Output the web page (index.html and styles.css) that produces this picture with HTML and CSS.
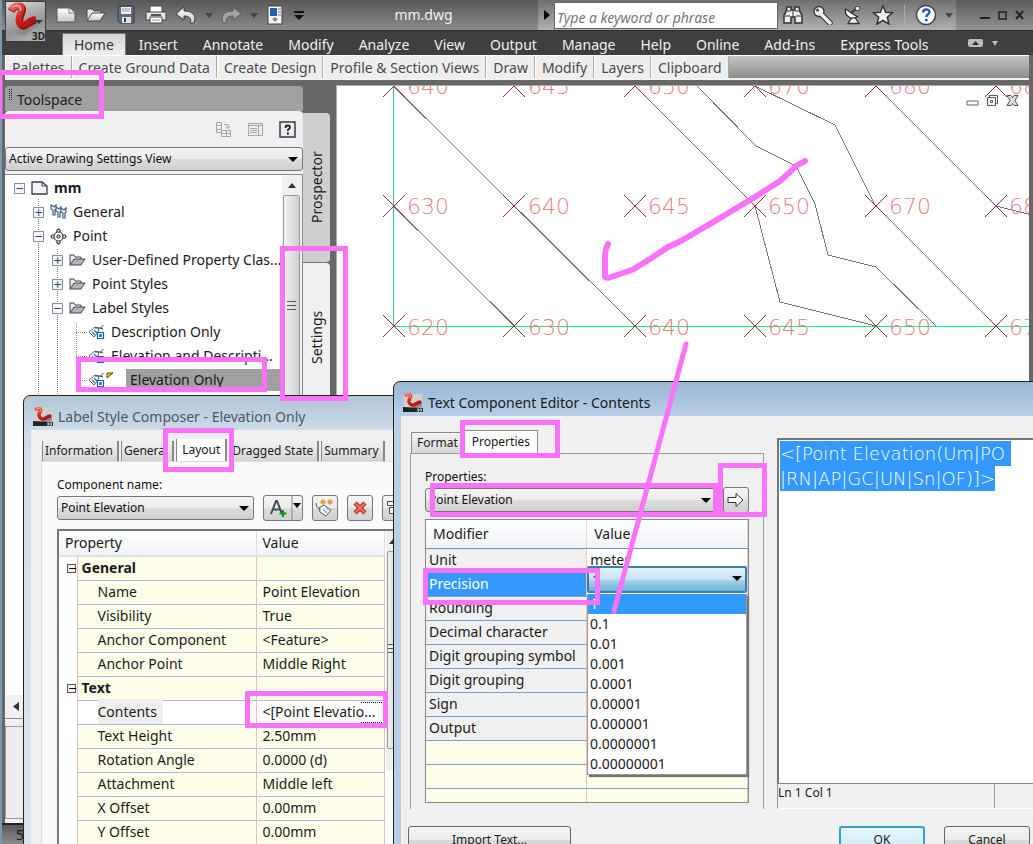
FILE: index.html
```html
<!DOCTYPE html>
<html lang="en">
<head>
<meta charset="utf-8">
<title>mm.dwg</title>
<link rel="stylesheet" href="styles.css">
</head>
<body>
<svg class="defs" aria-hidden="true">
  <defs>
    <linearGradient id="red" x1="0" y1="0" x2="1" y2="1"><stop offset="0" stop-color="#f46a60"/><stop offset=".5" stop-color="#d3201c"/><stop offset="1" stop-color="#a81212"/></linearGradient>
    <linearGradient id="steel" x1="0" y1="0" x2="0" y2="1"><stop offset="0" stop-color="#fff"/><stop offset="1" stop-color="#c4c8d0"/></linearGradient>
    <symbol id="i-civil" viewBox="0 0 20 20">
      <path d="M1 1h18v14H1z" fill="#cfcfcf"/>
      <path d="M7 12l5 3 7-1V8z" fill="#8d8d8d"/>
      <path d="M2 3c4-3 7-1 5 2s-1 6 2 7 4-3 9-3" stroke="url(#red)" stroke-width="3.500" fill="none"/>
      <path d="M3 2c3-2 6 0 4 3" stroke="#f79a92" fill="none"/>
      <path d="M0 14l20 1v4H0z" fill="#222"/><path d="M14 16h2v2h-2M17 16h1.500v2H17" stroke="#fff" fill="none" stroke-width=".8"/>
    </symbol>
    <symbol id="i-folder" viewBox="0 0 17 14">
      <path d="M1 12V2h4l1 2h6v3" fill="#eef0f4" stroke="#40454d"/><path d="M1 12l4-6h11l-4 6z" fill="#aeb4be" stroke="#40454d"/>
    </symbol>
    <symbol id="i-style" viewBox="0 0 17 16">
      <path d="M1 8l6-5 4 1-1 4-4 5z" fill="#fff" stroke="#5b6470"/><path d="M4 8l3 3M6 6l3 3" stroke="#3d7ea8" stroke-width="1.500"/><path d="M7 4c3 0 7 1 8-3M12 4l3 1" stroke="#39414d" fill="none"/>
      <path d="M9.500 8.500h6v6h-6z" fill="#fff" stroke="#0c62b0" stroke-width="1.200"/><path d="M11 10h3v3h-3z" fill="#2b8ad8"/>
    </symbol>
  </defs>
</svg>

<div class="app">
  <header class="titlebar">
    <div class="quick">
      <button class="tool" aria-label="New"><svg width="20" height="18"><path d="M1 2h12l6 5v9H1z" fill="url(#steel)" stroke="#55595f"/><path d="M13 2v5h6" fill="#fff" stroke="#777"/></svg></button>
      <button class="tool" aria-label="Open"><svg width="22" height="18"><path d="M2 14V3h5l2 2h7v4" fill="#e6e8ec" stroke="#44484f"/><path d="M2 15l5-8h13l-5 8z" fill="url(#steel)" stroke="#44484f"/></svg></button>
      <button class="tool" aria-label="Save"><svg width="20" height="20"><path d="M2 1h16v17H4l-2-2z" fill="#5f6c7e" stroke="#333b46"/><path d="M5 2h10v7H5z" fill="#f2f2f2"/><path d="M6 4h8M6 6h8" stroke="#999"/><path d="M6 12h9v6H6z" fill="#dfe3e8"/><path d="M8 13h2v4H8z" fill="#333"/></svg></button>
      <button class="tool" aria-label="Print"><svg width="22" height="20"><path d="M5 7V1h12v6" fill="#fff" stroke="#4b4b4b"/><path d="M1 7h20v8H1z" fill="#e4e4e4" stroke="#444"/><path d="M5 12h12v6H5z" fill="#fff" stroke="#444"/><path d="M6 10h10" stroke="#555" stroke-width="2"/><path d="M7 15h8" stroke="#999"/></svg></button>
      <button class="tool" aria-label="Undo"><svg width="22" height="18"><path d="M1 8l8-7v4c7 0 11 3 11 8l-1 4h-4c2-5-1-7-6-7v4z" fill="url(#steel)" stroke="#3c3f44"/></svg></button>
      <button class="tool tool--caret" aria-label="Undo list"><svg width="8" height="5"><path d="M0 0h8L4 5z" fill="#444"/></svg></button>
      <button class="tool" aria-label="Redo"><svg width="22" height="18"><path d="M21 8l-8-7v4C6 5 2 8 2 13l1 4h4c-2-5 1-7 6-7v4z" fill="#a3a3a3" stroke="#595959"/></svg></button>
      <button class="tool tool--caret" aria-label="Redo list"><svg width="8" height="5"><path d="M0 0h8L4 5z" fill="#444"/></svg></button>
      <button class="tool tool--sheet" aria-label="Sheet set"><svg width="18" height="20"><path d="M2 1h14v18H2z" fill="#f4f4f4" stroke="#444"/><path d="M4 3h7v8H4z" fill="#1d5fb0"/><path d="M12 4h3M12 7h3M12 10h3" stroke="#777"/><path d="M6 14l3-2 3 2-3 3z" fill="#888"/></svg></button>
      <button class="tool tool--more" aria-label="Customize"><svg width="10" height="9"><path d="M0 1h10" stroke="#111" stroke-width="2"/><path d="M0 4h10L5 9z" fill="#111"/></svg></button>
    </div>
    <div class="doc-title">mm.dwg</div>
    <div class="search">
      <svg class="search__arrow" width="6" height="10"><path d="M0 0l6 5-6 5z" fill="#000"/></svg>
      <input class="search__input" type="text" aria-label="Search" placeholder="Type a keyword or phrase">
      <button class="tool" aria-label="Find"><svg width="22" height="20"><path d="M5 2h4v3h4V2h4l1 5 2 3v8h-7v-6H9v6H2v-8l2-3z" fill="#eee" stroke="#333" stroke-width="1.500"/><path d="M5 6h4M13 6h4M3 11h5M14 11h5M11 5v7" stroke="#333"/></svg></button>
      <button class="tool" aria-label="Key"><svg width="22" height="20"><path d="M9 9l9 9" stroke="#333" stroke-width="5.500" stroke-linecap="round"/><circle cx="7" cy="6.500" r="5" fill="#eee" stroke="#333" stroke-width="1.300"/><path d="M9 9l9 9" stroke="#eee" stroke-width="3.500" stroke-linecap="round"/><circle cx="5.500" cy="5" r="1.500" fill="#444"/></svg></button>
      <button class="tool" aria-label="Communication"><svg width="20" height="20"><path d="M5 18.500h11l-4-6H9z" fill="#eee" stroke="#333" stroke-width="1.300"/><path d="M2.500 4c-1 7 5 11 12 8z" fill="#fff" stroke="#333" stroke-width="1.300"/><path d="M8 8l6-5" stroke="#333" stroke-width="2"/><circle cx="14.500" cy="3.500" r="2.200" fill="#fff" stroke="#333"/></svg></button>
      <button class="tool" aria-label="Favorites"><svg width="22" height="20"><path d="M11 1l2.700 6.300 6.800.5-5.200 4.400 1.700 6.800-6-3.700L5 19l1.700-6.800L1.500 7.800l6.800-.5z" fill="#eee" stroke="#333" stroke-width="1.500"/></svg></button>
      <span class="rule"></span>
      <button class="tool" aria-label="Help"><svg width="22" height="22"><circle cx="11" cy="11" r="9.500" fill="#fff" stroke="#454545" stroke-width="1.500"/><path d="M8 8.500c0-4 6.500-4 6.500-.5 0 2.500-3.200 2.500-3.200 5" fill="none" stroke="#245bc0" stroke-width="2.400"/><circle cx="11.300" cy="16" r="1.500" fill="#245bc0"/></svg></button>
      <button class="tool tool--caret" aria-label="Help list"><svg width="8" height="5"><path d="M0 0h8L4 5z" fill="#444"/></svg></button>
    </div>
    <div class="win-controls">
      <button aria-label="Minimize"><svg width="11" height="11"><path d="M0 8h10" stroke="#222" stroke-width="2"/></svg></button>
      <button aria-label="Maximize"><svg width="11" height="11"><path d="M2 2h7v7H2z" fill="none" stroke="#222" stroke-width="1.500"/></svg></button>
      <button aria-label="Close"><svg width="11" height="11"><path d="M2 1l7 8M9 1L2 9" stroke="#222" stroke-width="2"/></svg></button>
    </div>
    <button class="app-button" aria-label="Application menu"><svg width="39" height="40">
      <path d="M14 24l16-6 2 5-14 11-8-2z" fill="#8c8c8c"/>
      <path d="M5 9C9 2 19 3 16 10c-2 5-4 9-1 13 4 4 8-4 15-5" fill="none" stroke="#8f0e0e" stroke-width="7"/>
      <path d="M5 8C9 2 18 3 15 9c-2 5-4 9-1 13 4 4 8-4 15-5" fill="none" stroke="url(#red)" stroke-width="6"/>
      <path d="M6 5c5-3 10-1 8 4" fill="none" stroke="#f9a79f" stroke-width="1.500"/>
      <path d="M29 18h8l-4 4z" fill="#2b3a50"/><text x="26" y="38" class="app-button__tag">3D</text></svg></button>
  </header>

  <nav class="menu">
    <a class="menu__item menu__item--on" href="#">Home</a><a class="menu__item" href="#">Insert</a><a class="menu__item" href="#">Annotate</a><a class="menu__item" href="#">Modify</a><a class="menu__item" href="#">Analyze</a><a class="menu__item" href="#">View</a><a class="menu__item" href="#">Output</a><a class="menu__item" href="#">Manage</a><a class="menu__item" href="#">Help</a><a class="menu__item" href="#">Online</a><a class="menu__item" href="#">Add-Ins</a><a class="menu__item" href="#">Express Tools</a>
    <button class="menu__collapse" aria-label="Collapse ribbon"><svg width="32" height="10"><rect x="1" y="1" width="15" height="8" rx="2" fill="#bbb"/><path d="M5 7l3.500-4L12 7z" fill="#333"/><path d="M25 3h6l-3 5z" fill="#bbb"/></svg></button>
  </nav>

  <div class="ribbon">
    <button>Palettes</button><button>Create Ground Data</button><button>Create Design</button><button>Profile &amp; Section Views</button><button>Draw</button><button>Modify</button><button>Layers</button><button>Clipboard</button>
  </div>

  <main class="work">
    <section class="toolspace">
      <h2 class="toolspace__head">Toolspace</h2>
      <div class="toolspace__body">
        <div class="pane">
          <div class="pane__tools">
            <button aria-label="Panorama"><svg width="17" height="17" fill="none" stroke="#a5a5a5"><path d="M1.500 1.500h5v3h-5zM1.500 4.500h5v4h-5zM1.500 8.500v3h5M6.500 9.500h5v3h-5zM11.500 9.500h4v6h-9v-3M11.500 12.500h4M11.500 9.500v6M9 3.500h4v4M11 5.500l2 2 2-2"/></svg></button>
            <button aria-label="Preview"><svg width="17" height="15" fill="none" stroke="#a5a5a5"><path d="M1.500 1.500h14v12h-14zM1.500 3.500h14M3 6.500h7M3 8.500h7M3 10.500h7M11.500 4v9" /></svg></button>
            <button aria-label="Help"><svg width="17" height="17"><path d="M1 1h15v15H1z" fill="#e9edf2" stroke="#333b48" stroke-width="1.500"/><path d="M6.500 7c0-3.500 4.500-3 4.500-.5 0 1.500-2.300 1.500-2.300 3.500" fill="none" stroke="#222" stroke-width="1.800"/><path d="M8 11.500h1.800v2H8z"/></svg></button>
          </div>
          <div class="combo"><select aria-label="View"><option>Active Drawing Settings View</option></select></div>
          <div class="tree-box">
            <ul class="tree">
              <li class="node l0"><i class="tog">−</i><svg width="17" height="14"><path d="M1 1h10l5 4v8H1z" fill="#f2f4f8" stroke="#3a404a" stroke-width="1.300"/><path d="M11 1v4h5" fill="none" stroke="#3a404a"/></svg><b>mm</b></li>
              <li class="node l1"><i class="tog">+</i><svg width="17" height="16" fill="#fff" stroke="#3f6080" stroke-width="1.200"><path d="M1 1v4l2 1v5h2V6l1-1V1L4 3zM6 3v4l2 1v5h2V8l1-1V3L9 5zM11 4v4l2 1v5h2V9l1-1V4l-2 2z"/></svg><span>General</span></li>
              <li class="node l1"><i class="tog">−</i><svg width="17" height="17" fill="none" stroke="#333b46" stroke-width="1.200"><circle cx="8.500" cy="8.500" r="4.500"/><circle cx="8.500" cy="8.500" r="1.500"/><path d="M7 4V2l1.500-1L10 2v2M7 13v2l1.500 1 1.500-1v-2M4 7H2L1 8.500 2 10h2M13 7h2l1 1.500-1 1.500h-2"/></svg><span>Point</span></li>
              <li class="node l2"><i class="tog">+</i><svg width="17" height="14"><use href="#i-folder"/></svg><span>User-Defined Property Clas...</span></li>
              <li class="node l2"><i class="tog">+</i><svg width="17" height="14"><use href="#i-folder"/></svg><span>Point Styles</span></li>
              <li class="node l2"><i class="tog">−</i><svg width="17" height="14"><use href="#i-folder"/></svg><span>Label Styles</span></li>
              <li class="node l3"><i class="stub"></i><svg width="17" height="16"><use href="#i-style"/></svg><span>Description Only</span></li>
              <li class="node l3"><i class="stub"></i><svg width="17" height="16"><use href="#i-style"/></svg><span>Elevation and Descripti...</span></li>
              <li class="node l3"><i class="stub"></i><svg width="25" height="16"><use href="#i-style" width="17" height="16"/><path d="M19 1h6l-6 5z" fill="#f5c518" stroke="#5a4a10"/></svg><span class="node__sel">Elevation Only</span></li>
            </ul>
            <div class="vbar"><span class="vbar__up"></span><span class="vbar__thumb"></span></div>
            <div class="hbar"><svg width="6" height="9"><path d="M6 0v9L0 4.500z" fill="#333"/></svg></div>
          </div>
          <div class="pane__lower"></div>
        </div>
        <div class="side-tabs"><button>Prospector</button><button class="on">Settings</button></div>
      </div>
    </section>
    <section class="canvas">
      <svg class="plot"><g transform="translate(-337 -86)">
        <g class="contours">
          <path d="M393.500 86L635 326M393.500 206l121 120M635 86l120 120 25 96 96 24M697 86l59 60 40 20 19 38 13 51 48 12 60 59M755 86l80 39 40 80 121 121M876 86l120 120 120 30"/>
        </g>
        <path class="edge" d="M393.500 86v240"/><path class="edge edge--base" d="M393 326.500h4000"/>
        <g class="crosses">
          <path d="M383 75l22 22m0-22l-22 22M503 75l22 22m0-22l-22 22M624 75l22 22m0-22l-22 22M744 75l22 22m0-22l-22 22M865 75l22 22m0-22l-22 22M985 75l22 22m0-22l-22 22"/>
          <path d="M383 195l22 22m0-22l-22 22M503 195l22 22m0-22l-22 22M624 195l22 22m0-22l-22 22M744 195l22 22m0-22l-22 22M865 195l22 22m0-22l-22 22M985 195l22 22m0-22l-22 22"/>
          <path d="M383 315l22 22m0-22l-22 22M503 315l22 22m0-22l-22 22M624 315l22 22m0-22l-22 22M744 315l22 22m0-22l-22 22M865 315l22 22m0-22l-22 22M985 315l22 22m0-22l-22 22"/>
        </g>
        <g class="levels">
          <text x="407" y="94">640</text><text x="528" y="94">645</text><text x="648" y="94">650</text><text x="768" y="94">670</text><text x="889" y="94">680</text><text x="1009" y="94">680</text>
          <text x="407" y="214">630</text><text x="528" y="214">640</text><text x="648" y="214">645</text><text x="768" y="214">650</text><text x="889" y="214">670</text><text x="1009" y="214">680</text>
          <text x="407" y="335">620</text><text x="528" y="335">630</text><text x="648" y="335">640</text><text x="768" y="335">645</text><text x="889" y="335">650</text><text x="1009" y="335">670</text>
        </g>
      </g></svg>
      <div class="canvas__controls">
        <button aria-label="Minimize drawing"><svg width="13" height="13"><path d="M1 7h11v4H1z" fill="#fff" stroke="#666"/></svg></button>
        <button aria-label="Restore drawing"><svg width="13" height="13" fill="#fff" stroke="#555"><path d="M3.500 1.500h8v8h-8z"/><path d="M1.500 3.500h8v8h-8z"/><path d="M4.500 6.500h2v2h-2z"/></svg></button>
        <button aria-label="Close drawing"><svg width="13" height="13"><path d="M1 1.500h4l1.500 2L8 1.500h4L9 6.500l3 5H8L6.500 9.500 5 11.500H1l3-5z" fill="#ddd" stroke="#555"/></svg></button>
      </div>
    </section>
  </main>
  <footer class="status">5</footer>
</div>

<section class="dialog dialog--composer" role="dialog" aria-label="Label Style Composer">
  <h1 class="dialog__title"><svg width="20" height="20"><use href="#i-civil"/></svg>Label Style Composer - Elevation Only</h1>
  <div class="dialog__body composer">
    <div class="ctabs"><button>Information</button><button>General</button><button class="on">Layout</button><button>Dragged State</button><button>Summary</button></div>
    <div class="cpanel">
      <label class="lbl" for="comp">Component name:</label>
      <div class="crow">
        <div class="combo crow__combo"><select id="comp"><option>Point Elevation</option></select></div>
        <button class="btn btn--split" aria-label="Add component"><svg width="40" height="24"><path d="M7 18l5-13h1l5 13M9 13.500h7" fill="none" stroke="#434a55" stroke-width="2"/><path d="M19 14v7M15.500 17.500h7" stroke="#0c9a18" stroke-width="2"/><path d="M28 0v24" stroke="#888"/><path d="M29 7h8l-4 5z"/></svg></button>
        <button class="btn" aria-label="Copy component"><svg width="20" height="20"><path d="M4 10l5-3 7 5-5 6-6-4z" fill="#fff" stroke="#49627c"/><path d="M8 11l4 4M11 9l3 3" stroke="#7da7cc" stroke-width="1.500"/><path d="M1 5c0 3 1 5 5 6" fill="none" stroke="#555"/><path d="M5 4h6M12 4h6M8 1v6M15 1v6M6 2l4 4M10 2L6 6M13 2l4 4M17 2l-4 4" stroke="#e08a1c"/></svg></button>
        <button class="btn" aria-label="Delete component"><svg width="16" height="16"><path d="M3 3l10 10M13 3L3 13" stroke="#a82320" stroke-width="4.500"/><path d="M3 3l10 10M13 3L3 13" stroke="#f26a61" stroke-width="2.500"/></svg></button>
        <button class="btn" aria-label="Order components"><svg width="20" height="20" fill="#fff" stroke="#444"><path d="M2.500 3.500h14v4h-14zM4.500 9.500h10v6h-10z"/></svg></button>
      </div>
      <div class="sheet">
        <table class="props">
          <colgroup><col class="c-gut"><col class="c-name"><col></colgroup>
          <thead><tr><th colspan="2">Property</th><th>Value</th></tr></thead>
          <tbody>
            <tr class="grp"><td><i class="tog tog--sm">−</i></td><td>General</td><td></td></tr>
            <tr><td></td><td>Name</td><td>Point Elevation</td></tr>
            <tr><td></td><td>Visibility</td><td>True</td></tr>
            <tr><td></td><td>Anchor Component</td><td>&lt;Feature&gt;</td></tr>
            <tr><td></td><td>Anchor Point</td><td>Middle Right</td></tr>
            <tr class="grp"><td><i class="tog tog--sm">−</i></td><td>Text</td><td></td></tr>
            <tr class="cur"><td></td><td><span>Contents</span></td><td>&lt;[Point Elevatio...<i class="dots"></i></td></tr>
            <tr><td></td><td>Text Height</td><td>2.50mm</td></tr>
            <tr><td></td><td>Rotation Angle</td><td>0.0000 (d)</td></tr>
            <tr><td></td><td>Attachment</td><td>Middle left</td></tr>
            <tr><td></td><td>X Offset</td><td>0.00mm</td></tr>
            <tr><td></td><td>Y Offset</td><td>0.00mm</td></tr>
          </tbody>
        </table>
        <div class="vbar"><span class="vbar__up"></span><span class="vbar__thumb vbar__thumb--long"></span></div>
      </div>
    </div>
  </div>
</section>

<section class="dialog dialog--editor" role="dialog" aria-label="Text Component Editor">
  <h1 class="dialog__title"><svg width="20" height="20"><use href="#i-civil"/></svg>Text Component Editor - Contents</h1>
  <div class="dialog__body editor">
    <div class="editor__cols">
      <div class="editor__left">
        <div class="etabs"><button>Format</button><button class="on">Properties</button></div>
        <div class="epanel">
          <label class="lbl" for="prop">Properties:</label>
          <div class="erow">
            <div class="combo erow__combo"><select id="prop"><option>Point Elevation</option></select></div>
            <button class="btn" aria-label="Insert property"><svg width="18" height="16"><path d="M1 5.500h8v-4l7 6.500-7 6.500v-4H1z" fill="#fff" stroke="#333"/></svg></button>
          </div>
          <div class="mods-box">
            <table class="mods">
              <colgroup><col><col></colgroup>
              <thead><tr><th>Modifier</th><th>Value</th></tr></thead>
              <tbody>
                <tr><td>Unit</td><td class="white">meter</td></tr>
                <tr class="cur"><td>Precision</td><td class="white"></td></tr>
                <tr><td>Rounding</td><td></td></tr>
                <tr><td>Decimal character</td><td></td></tr>
                <tr><td>Digit grouping symbol</td><td></td></tr>
                <tr><td>Digit grouping</td><td></td></tr>
                <tr><td>Sign</td><td></td></tr>
                <tr><td>Output</td><td></td></tr>
                <tr class="blank"><td></td><td></td></tr>
                <tr class="blank"><td></td><td></td></tr>
                <tr class="blank blank--last"><td></td><td></td></tr>
              </tbody>
            </table>
            <div class="drop">
              <div class="combo combo--hot"><select aria-label="Precision"><option>1</option></select></div>
              <ul class="drop__list" role="listbox" aria-label="Precision values">
                <li role="option" aria-selected="true">1</li><li role="option">0.1</li><li role="option">0.01</li><li role="option">0.001</li><li role="option">0.0001</li><li role="option">0.00001</li><li role="option">0.000001</li><li role="option">0.0000001</li><li role="option">0.00000001</li>
              </ul>
            </div>
          </div>
        </div>
      </div>
      <div class="editor__right">
        <textarea class="code" aria-label="Contents" spellcheck="false">&lt;[Point Elevation(Um|PO
|RN|AP|GC|UN|Sn|OF)]&gt;</textarea>
        <div class="pos"><span class="pos__cell">Ln 1 Col 1</span></div>
      </div>
    </div>
    <div class="editor__foot">
      <button class="push push--import">Import Text...</button>
      <button class="push push--ok">OK</button>
      <button class="push">Cancel</button>
    </div>
  </div>
</section>

<svg class="marks" aria-hidden="true">
  <path d="M0 72.500h101.500v44H0zM282.500 248.500h63v150h-63zM78.500 359.500h186v30h-186zM165.500 430.500h66v39h-66zM247.500 693.500h138v32h-138zM462.500 422.500h95v33h-95zM432.500 485.500h283v29h-283zM720.500 465.500h44v49h-44zM425.500 570.500h172v32h-172z"/>
  <path class="pen" d="M608 244q-3 6-3 12v21l3 1 9-3 15-5 18-11 18-12 13-6 39-23 35-21 25-16 10-9 6-6 9-5"/>
  <path class="pen pen--thin" d="M686 344l-72 267"/>
</svg>
<script src="main.js"></script>
</body>
</html>
```
FILE: main.js
```js
const code = document.querySelector('.code');
code.focus({ preventScroll: true });
code.setSelectionRange(0, code.value.length);
```
FILE: styles.css
```css
* { box-sizing: border-box; }
html, body { height: 100%; }
body { margin: 0; overflow: hidden; position: relative; background: #676767; color: #1a1a1a; font: 14px/20px "Noto Sans", "Open Sans", sans-serif; }
button, input, select, textarea { font: inherit; color: inherit; margin: 0; }
button { border: 0; background: none; padding: 0; }
ul { list-style: none; margin: 0; padding: 0; }
h1, h2 { margin: 0; font-weight: 400; }
i { font-style: normal; }
svg { display: block; flex: none; }
.defs { position: absolute; width: 0; height: 0; }

.app { height: 100%; display: flex; flex-direction: column; border-left: 2px solid #7f97a8; }

.titlebar { position: relative; height: 31px; flex: none; display: flex; align-items: stretch; padding-left: 49px; background: linear-gradient(#575757, #8b8b8b); border-bottom: 1px solid #2e2e2e; }
.quick { display: flex; }
.tool { width: 30px; display: grid; place-items: center; }
.tool--caret { width: 15px; }
.tool--sheet { width: 28px; }
.tool--more { width: 20px; }
.doc-title { flex: 1; text-align: center; line-height: 30px; color: #f2f2f2; }
.search { display: flex; background: linear-gradient(#707070, #b0b0b0); }
.search__arrow { align-self: center; margin: 0 4px 0 6px; }
.search__input { width: 224px; height: 27px; align-self: center; border: 1px solid #666; background: #fff; padding: 4px 2px 0; font-style: italic; border-radius: 0; }
.search__input::placeholder { color: #777; opacity: 1; }
.rule { width: 1px; margin: 5px 6px; background: #aaa; }
.win-controls { display: flex; align-items: center; padding: 0 5px 0 21px; background: linear-gradient(#5c5c5c, #929292); }
.win-controls button { width: 17px; display: grid; place-items: center; }
.app-button { position: absolute; left: 3px; top: 1px; z-index: 2; width: 41px; height: 41px; background: linear-gradient(160deg, #d8d8d8, #949494 60%, #b5b5b5); border: 1px solid #3d3d3d; }
.app-button__tag { font: bold 10px "Noto Sans", sans-serif; fill: #222; }

.menu { height: 24px; flex: none; display: flex; align-items: flex-end; gap: 1px; padding-left: 60px; background: #3f3f3f; }
.menu__item { color: #f0f0f0; text-decoration: none; padding: 2px 12px 0; line-height: 20px; }
.menu__item--on { background: linear-gradient(#d3d3d3, #efefef); color: #333; border: 1px solid #777; border-bottom: 0; padding: 1px 11px 0; }
.menu__collapse { margin-left: 26px; align-self: center; }

.ribbon { flex: none; height: 25px; display: flex; margin: 0 4px 0 3px; background: linear-gradient(#c4c4c4, #8c8c8c); border-bottom: 2px solid #f2f2f2; border-top: 1px solid #fff; }
.ribbon button { padding: 2px 6px 0; color: #4a4a4a; background: #eee; border-right: 1px solid #aaa; border-left: 1px solid #fff; white-space: nowrap; }

.work { flex: 1; min-height: 0; display: flex; padding: 6px 4px 0 3px; }
.toolspace { display: flex; flex-direction: column; flex: none; width: 331px; }
.toolspace__head { width: 298px; height: 25px; background: #a0a0a0; border-radius: 4px 4px 0 0; padding: 4px 12px 0; font-size: 14px; color: #222; position: relative; }
.toolspace__head::before { content: ""; position: absolute; left: 3px; top: 3px; width: 4px; height: 12px; background: conic-gradient(#222 25%, transparent 0) 0 0 / 2px 2px; }
.toolspace__body { flex: 1; min-height: 0; display: flex; }
.pane { width: 298px; display: flex; flex-direction: column; background: #f0f0f0; border-radius: 4px 4px 0 0; }
.pane__tools { display: flex; justify-content: flex-end; align-items: center; gap: 15px; height: 36px; padding-right: 7px; }
.tree-box { flex: 1; min-height: 0; margin-top: 3px; position: relative; border: 1px solid #888; border-width: 1px 1px 1px 0; background: #fff; display: grid; grid-template: 1fr 23px / 1fr 20px; }
.tree { padding-top: 1px; overflow: hidden; background: repeating-linear-gradient(#888 0 1px, transparent 1px 2px) 33px 24px / 1px 100% no-repeat, repeating-linear-gradient(#888 0 1px, transparent 1px 2px) 52px 74px / 1px 100% no-repeat, repeating-linear-gradient(#888 0 1px, transparent 1px 2px) 71px 148px / 1px 68px no-repeat; }
.node { height: 24px; display: flex; align-items: center; gap: 6px; white-space: nowrap; font-size: 14px; }
.l0 { padding-left: 9px; } .l1 { padding-left: 28px; } .l2 { padding-left: 47px; } .l3 { padding-left: 66px; }
.tog { width: 11px; height: 11px; flex: none; border: 1px solid #8a8f98; background: #f4f6fa; color: #2a4a9a; font: 11px/9px "DejaVu Sans", sans-serif; text-align: center; }
.stub { width: 11px; height: 1px; margin-left: 5px; margin-right: -5px; flex: none; background: repeating-linear-gradient(90deg, #888 0 1px, transparent 1px 2px); }
.node__sel { flex: 1; margin-left: 7px; padding-left: 4px; background: #a0a0a0; height: 22px; line-height: 22px; }
.vbar { background: #f0f0f0; padding: 0 2px 0 1px; display: flex; flex-direction: column; }
.vbar__up { height: 20px; display: grid; place-items: center; }
.vbar__up::before { content: ""; border: 4px solid transparent; border-top: 0; border-bottom: 5px solid #333; }
.vbar__thumb { height: 224px; border: 1px solid #989898; border-radius: 2px; background: repeating-linear-gradient(#555 0 1px, transparent 1px 4px) center / 9px 12px no-repeat, linear-gradient(90deg, #f3f3f3, #cfcfd2); }
.vbar__thumb--long { height: 198px; }
.hbar { background: #f0f0f0; display: flex; align-items: center; padding-left: 8px; }
.pane__lower { height: 93px; margin: 7px 0 4px; background: #eee; border: 1px solid #999; }
.side-tabs { width: 27px; flex: none; padding-top: 2px; display: flex; flex-direction: column; }
.side-tabs button { height: 150px; writing-mode: vertical-rl; transform: rotate(180deg); background: #cfcfcf; border-radius: 4px 0 0 4px; border-top: 1px solid #777; }
.side-tabs .on { background: #f0f0f0; }

.canvas { flex: 1; min-width: 0; position: relative; background: #fff; border: 1px solid #aaa; border-width: 0 0 0 1px; box-shadow: 0 -1px #aaa; }
.plot { width: 100%; height: 100%; }
.contours path { fill: none; stroke: #777; shape-rendering: crispEdges; }
.edge { stroke: #34cf94; stroke-width: 1; shape-rendering: crispEdges; }
.edge--base { stroke: #00f57a; }
.crosses path { stroke: #a02830; fill: none; shape-rendering: crispEdges; }
.levels text { font: 200 22px "DejaVu Sans", sans-serif; fill: #ea7f83; }
.canvas__controls { position: absolute; top: 8px; right: 10px; display: flex; gap: 7px; }

.status { height: 21px; flex: none; padding-left: 14px; background: linear-gradient(#5a5a5a, #8a8a8a); border-top: 2px solid #222; line-height: 19px; }

.combo { position: relative; height: 24px; }
.combo select { appearance: none; width: 100%; height: 100%; padding: 0 20px 0 3px; border: 1px solid #777; border-radius: 3px; background: linear-gradient(#f4f4f4, #ebebeb 50%, #dcdcdc 51%, #cfcfcf); font-size: 12px; color: #111; }
.combo::after { content: ""; position: absolute; right: 5px; top: 10px; border: 5px solid transparent; border-top-color: #000; border-bottom: 0; pointer-events: none; }
.btn { height: 26px; width: 26px; display: grid; place-items: center; border: 1px solid #777; border-radius: 3px; background: linear-gradient(#f5f5f5, #ebebeb 50%, #dcdcdc 51%, #d0d0d0); overflow: hidden; }
.lbl { display: block; font-size: 12px; line-height: 16px; color: #111; }

.dialog { position: absolute; bottom: -24px; display: flex; flex-direction: column; border: 1px solid #222; border-radius: 7px 7px 0 0; overflow: hidden; }
.dialog__title { height: 34px; flex: none; display: flex; align-items: center; gap: 5px; padding-left: 9px; padding-top: 8px; font-size: 14px; }
.dialog__body { flex: 1; min-height: 0; margin-left: 7px; background: #f0f0f0; }
.dialog--composer { left: 23px; top: 395px; width: 50%; background: linear-gradient(#b4c5d6, #d0deeb 40px, #dbe5f0); color: #1a1a1a; }
.dialog--composer .dialog__title { color: #4b5866; }
.composer { display: flex; flex-direction: column; padding: 9px 0 0 10px; }
.ctabs { display: flex; align-items: flex-end; font-size: 12px; padding-left: 1px; }
.ctabs button { height: 20px; padding: 0 4px 0 2px; margin-right: 2px; background: linear-gradient(#f2f2f2, #d5d5d5); border-left: 1px solid #888; border-right: 2px solid #888; white-space: nowrap; }
.ctabs .on { height: 22px; background: #fff; padding: 0 5px; }
.cpanel { flex: 1; min-height: 0; display: flex; flex-direction: column; background: #fafafa; border: 1px solid #ddd; padding: 15px 0 0 15px; }
.crow { display: flex; gap: 9px; margin: 2px 0 8px; align-items: center; }
.crow__combo { width: 197px; }
.btn--split { width: 40px; }
.sheet { flex: 1; min-height: 0; display: flex; gap: 1px; width: 345px; border: 2px solid #777; border-bottom: 0; background: #fff; overflow: hidden; }
.sheet .vbar { width: 17px; height: 240px; }
.props { width: 326px; flex: none; align-self: flex-start; border-collapse: collapse; table-layout: fixed; font-size: 14px; }
.c-gut { width: 18px; } .c-name { width: 179px; }
th { text-align: left; font-weight: 400; font-size: 14px; }
.props th { height: 25px; padding: 0 6px; background: linear-gradient(#fff, #f0f3f6); border-right: 1px solid #ddd; border-bottom: 2px solid #dde3e8; }
.props td { height: 24px; padding: 0 6px; line-height: 18px; background: #ffffe9; border-right: 1px solid #e7bfc0; border-bottom: 1px solid #b7b7ea; white-space: nowrap; }
.props td:nth-child(2) { padding-left: 20px; }
.props td:first-child { background: #fff; border-bottom: 0; padding: 0 0 0 8px; }
.props .grp td:nth-child(2) { padding-left: 4px; font-weight: 700; }
.props .cur td { background: #fff; position: relative; }
.props .cur span { background: #eee; padding: 3px 6px 3px 0; }
.tog--sm { display: block; width: 9px; height: 9px; line-height: 7px; border-color: #555; color: #000; }
.dots { position: absolute; right: 0; top: 1px; width: 23px; height: 21px; border: 1px dotted #111; border-left: 0; }

.dialog--editor { left: 393px; right: -8px; top: 381px; background: linear-gradient(#9ab6d3, #bad0e8 36px, #b6cde5); }
.editor { display: flex; flex-direction: column; padding: 14px 0 0 9px; }
.editor__cols { display: flex; gap: 13px; }
.editor__left { width: 354px; flex: none; }
.etabs { display: flex; align-items: flex-end; font-size: 12px; height: 23px; padding-left: 1px; }
.etabs button { height: 21px; padding: 0 5px; border: 1px solid #8a8a8a; border-bottom: 0; background: linear-gradient(#f2f2f2, #d8d8d8); }
.etabs .on { height: 23px; background: #fff; padding: 0 7px; }
.epanel { height: 356px; border: 1px solid #999; border-bottom: 0; padding: 15px 14px 0; }
.erow { display: flex; align-items: center; gap: 7px; margin: 2px 0 6px; }
.erow__combo { flex: 1; }
.mods-box { position: relative; border: 1px solid #888; background: #ffffe9; }
.mods { width: 100%; border-collapse: collapse; table-layout: fixed; font-size: 14px; }
.mods th { height: 28px; padding: 0 7px; background: linear-gradient(#fff, #f0f3f6); border-bottom: 1px solid #6f93bd; border-right: 1px solid #ddd; }
.mods td { height: 24px; padding: 0 3px; line-height: 18px; background: #f0f0f0; border-bottom: 1px solid #7f9fc6; border-right: 1px solid #e9c6c0; }
.mods .white { background: #fff; }
.mods .cur td:first-child { background: #3399ff; color: #fff; }
.mods .blank td { background: #ffffe9; }
.mods .blank--last td { height: 14px; border-bottom: 0; }
.drop { position: absolute; left: 50%; right: 1px; top: 46px; }
.combo--hot { height: 27px; }
.combo--hot select { border: 2px solid #3a7fa8; border-radius: 2px; background: linear-gradient(#e4f2fa, #c5e2f2 50%, #a9d3ea 51%, #6cb3d6); font-size: 14px; }
.drop__list { background: #fff; border: 1px solid #999; border-top: 0; box-shadow: 2px 2px 1px #777; font-size: 14px; }
.drop__list li { height: 20px; line-height: 20px; padding-left: 2px; }
.drop__list [aria-selected] { background: #3399ff; color: #fff; margin-top: 1px; }
.editor__right { flex: 1; min-width: 0; padding-top: 8px; display: flex; flex-direction: column; }
.code { display: block; height: 346px; width: 100%; resize: none; outline: 0; border: 2px solid #777; border-bottom: 1px solid #888; border-radius: 0; padding: 1px; background: #fff; white-space: pre; overflow: hidden; font: 200 18px/25px "DejaVu Sans", sans-serif; }
.code::selection { background: #3399ff; color: #fff; }
.pos { display: flex; height: 25px; font-size: 12px; line-height: 18px; border-left: 1px solid #999; border-bottom: 1px solid #fff; }
.pos__cell { width: 217px; border-right: 1px solid #999; }
.editor__foot { display: flex; gap: 19px; padding: 17px 10px 0 0; margin-left: -2px; }
.push { width: 86px; height: 28px; font-size: 12px; border: 1px solid #666; border-radius: 3px; background: linear-gradient(#f4f4f4, #ececec 50%, #dadada 51%, #d0d0d0); }
.push--import { width: 163px; margin-right: auto; }
.push--ok { border: 2px solid #2fa3cc; background: linear-gradient(#eaf6fc, #c8e8f6); }

.marks { position: absolute; left: 0; top: 0; width: 100%; height: 100%; pointer-events: none; fill: none; stroke: #fa72fa; stroke-width: 5; }
.pen { stroke-linecap: round; stroke-linejoin: round; stroke-width: 6; }
.pen--thin { stroke-width: 5; }
```
